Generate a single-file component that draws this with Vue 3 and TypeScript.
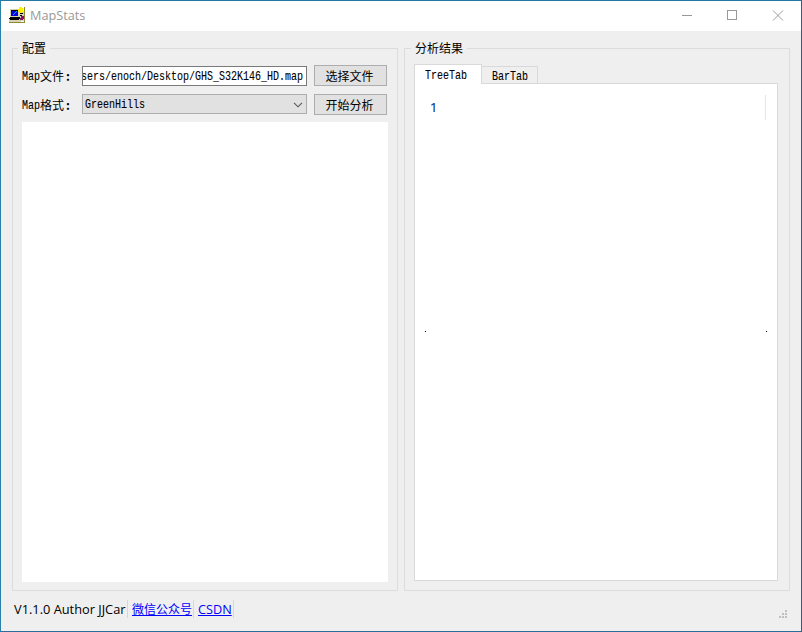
<script setup lang="ts">
import { ref } from 'vue'

const title = 'MapStats'
const filePath = 'sers/enoch/Desktop/GHS_S32K146_HD.map'
const format = 'GreenHills'
const tabs = ['TreeTab', 'BarTab']
const activeTab = ref(0)

// half-width glyphs occupy a fixed 6px cell
const cell = (s: string) => ({ width: `${s.length * 6}px` })
</script>

<template>
  <div class="window">
    <header class="titlebar">
      <svg class="app-icon" width="16" height="16" viewBox="0 0 16 16" shape-rendering="crispEdges">
        <path fill="#d5d2b4" d="M1 2h10v8H1zM0 12h12v3H0zM11 5h4v9h-4z" />
        <path fill="#000" d="M2 3h7v1H2zM1 10h10v2h-1v1H1v-1H0v-1h1zM11 6h3v1h-3z" />
        <path fill="#0000e0" d="M2 4h7v5H2z" />
        <path fill="#00a8f8" d="M7 4h1v1H7zM6 5h1v1H6zM5 6h1v1H5zM4 7h1v1H4z" />
        <path fill="#ffee00" d="M10 0h3v1h1v4h-1v1h-3V5H9V2h1zM14 4h1v1h-1z" />
        <path fill="#85106d" d="M12 9h3v3h-1v1h-3v-2h1z" />
        <path fill="#000" d="M11 8h2v1h-2z" />
        <path fill="#8d8932" d="M0 15h15V0h1v16H0z" />
      </svg>
      <span class="title">{{ title }}</span>
      <svg class="controls" width="102" height="11" viewBox="0 0 102 11" fill="none" stroke="#999">
        <path d="M0 5.5h10M45.5.5h9v9h-9z" shape-rendering="crispEdges" />
        <path d="M91 .5l10 10M101 .5l-10 10" />
      </svg>
    </header>

    <main class="content">
      <fieldset class="group config">
        <legend>配置</legend>
        <div class="row">
          <label><span class="mono" :style="cell('Map')"><i>Map</i></span>文件<b>:</b></label>
          <div class="input path"><span class="mono" :style="cell(filePath)"><i>{{ filePath }}</i></span></div>
          <button>选择文件</button>
        </div>
        <div class="row">
          <label><span class="mono" :style="cell('Map')"><i>Map</i></span>格式<b>:</b></label>
          <div class="input combo">
            <span class="mono" :style="cell(format)"><i>{{ format }}</i></span>
            <svg width="10" height="6" viewBox="0 0 10 6" fill="none" stroke="#555" stroke-width="1.1"><path d="M1 .8l4 4 4-4" /></svg>
          </div>
          <button>开始分析</button>
        </div>
        <div class="log"></div>
      </fieldset>

      <fieldset class="group result">
        <legend>分析结果</legend>
        <nav class="tabs">
          <div v-for="(t, i) in tabs" :key="t" class="tab" :class="{ active: i === activeTab }" @click="activeTab = i">
            <span class="mono" :style="cell(t)"><i>{{ t }}</i></span>
          </div>
        </nav>
        <div class="pane">
          <div class="tree-head"><span>1</span></div>
          <div class="marks"><span></span><span></span></div>
        </div>
      </fieldset>
    </main>

    <footer class="status">
      <span class="item version">V1.1.0 Author JJCar</span>
      <span class="item wechat"><a>微信公众号</a></span>
      <span class="item csdn"><a>CSDN</a></span>
      <svg class="grip" width="8" height="8" viewBox="0 0 8 8" fill="#bfbfbf" shape-rendering="crispEdges">
        <path d="M6 0h2v2H6zM3 3h2v2H3zM6 3h2v2H6zM0 6h2v2H0zM3 6h2v2H3zM6 6h2v2H6z" />
      </svg>
    </footer>
  </div>
</template>

<style>
body { margin: 0; overflow: hidden; }
</style>

<style scoped>
* { box-sizing: border-box; }
.window {
  width: 802px;
  height: 632px;
  display: flex;
  flex-direction: column;
  border: 1px solid;
  border-color: #2478a4 #2f5b8e #2b6c98 #2b80aa;
  background: #efefef;
  color: #000;
  font: 12px/16px "Noto Sans CJK SC", sans-serif;
}
.titlebar {
  flex: none;
  height: 30px;
  display: flex;
  align-items: center;
  padding: 0 17px 2px 8px;
  background: #fff;
}
.title {
  margin-left: 5px;
  color: #999;
  font: 12.7px/16px "Open Sans", sans-serif;
}
.controls { margin-left: auto; }
.content {
  height: 560px;
  flex: none;
  display: flex;
  gap: 6px;
  padding: 8px 11px 0;
}
.group {
  min-width: 0;
  height: 552px;
  margin: 0;
  padding: 0 9px;
  border: 1px solid #dcdcdc;
}
.group legend {
  height: 18px;
  line-height: 18px;
  margin-left: -4px;
  padding: 0 4px;
}
.config, .result { width: 386px; }
.result legend { margin-left: -3px; }
.row {
  height: 21px;
  display: flex;
  align-items: center;
  margin-top: 8px;
}
label {
  width: 60px;
  display: flex;
  align-items: center;
}
label .mono { margin-top: 2px; }
label b { width: 12px; padding-left: 2px; font-weight: 700; }
.mono {
  display: inline-block;
  height: 14px;
  white-space: nowrap;
  font: 11px/14px "Liberation Mono", monospace;
  -webkit-text-stroke: .1px currentColor;
}
.mono i {
  display: inline-block;
  font-style: normal;
  transform: scale(.909, 1.14);
  transform-origin: 0 75%;
}
.input {
  width: 225px;
  height: 20px;
  display: flex;
  align-items: center;
  overflow: hidden;
  border: 1px solid #7a7a7a;
  background: #fff;
}
.path {
  justify-content: flex-end;
  padding: 2px 3px 0 0;
}
.combo {
  align-self: flex-start;
  justify-content: space-between;
  padding: 0 3px 0 2px;
  border-color: #adadad;
  background: #e1e1e1;
}
.combo .mono { margin-top: 2px; }
.combo svg { margin-top: 2px; }
button {
  width: 73px;
  height: 21px;
  margin-left: 7px;
  padding: 0 2px 0 0;
  border: 1px solid #adadad;
  border-radius: 0;
  background: #e1e1e1;
  color: #000;
  font: inherit;
}
.log {
  width: 366px;
  height: 460px;
  margin-top: 7px;
  background: #fff;
}
.tabs {
  height: 20px;
  display: flex;
  align-items: flex-end;
  margin-top: 7px;
}
.tab {
  width: 56px;
  height: 18px;
  padding: 0 0 0 10px;
  border: 1px solid #d9d9d9;
  border-left: 0;
}
.tab.active {
  z-index: 1;
  width: 68px;
  height: 20px;
  padding: 1px 0 0 10px;
  border-left: 1px solid #d9d9d9;
  border-bottom: 0;
  background: #fff;
}
.pane {
  width: 364px;
  height: 498px;
  margin-top: -1px;
  padding: 11px 10px;
  border: 1px solid #d9d9d9;
  background: #fff;
}
.tree-head {
  width: 341px;
  height: 25px;
  padding-left: 5px;
  border-right: 1px solid #e5e5e5;
  color: #003399;
  font: 13px/25px "Open Sans", sans-serif;
  -webkit-text-stroke: .2px currentColor;
}
.marks {
  display: flex;
  justify-content: space-between;
  margin-top: 211px;
}
.marks span { width: 1px; height: 1px; background: #000; }
.status {
  flex: 1;
  display: flex;
  padding: 9px 14px 0 13px;
}
.item {
  height: 18px;
  line-height: 18px;
  border-right: 1px solid #d7d7d7;
  white-space: nowrap;
}
.version { width: 114px; font-family: "Open Sans", sans-serif; font-size: 12.8px; }
.wechat { width: 66px; padding-left: 4px; }
.csdn { width: 40px; padding-left: 4px; font-family: "Open Sans", sans-serif; font-size: 12.7px; }
a { color: #00f; text-decoration: underline; }
.grip { margin: 10px 0 0 auto; }
</style>
